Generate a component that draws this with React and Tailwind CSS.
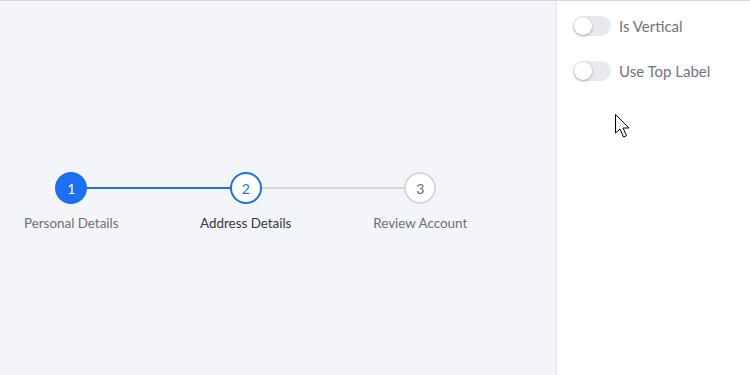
import React from "react";

const font = { fontFamily: "Lato, 'Noto Sans', sans-serif" };

function Step({ n, label, state, left, right }) {
  const circle =
    state === "done"
      ? "bg-[#1b6ff2] border-[#1b6ff2] text-white"
      : state === "active"
      ? "bg-white border-[#1b6ff2] text-[#1b6ff2]"
      : "bg-white border-[#d4d7dd] text-[#5f6670]";
  const labelColor = state === "active" ? "text-[#33383f]" : "text-[#6b717b]";
  return (
    <div className="flex flex-col items-center w-[174.5px] shrink-0">
      <div className="flex items-center w-full">
        <div className={`flex-1 h-[2px] ${left || "bg-transparent"}`} />
        <div
          className={`w-8 h-8 rounded-full border-2 flex items-center justify-center text-[14px] ${circle}`}
        >
          {n}
        </div>
        <div className={`flex-1 h-[2px] ${right || "bg-transparent"}`} />
      </div>
      <div className={`mt-[9px] text-[13.4px] leading-5 ${labelColor}`}>{label}</div>
    </div>
  );
}

function Toggle({ label }) {
  return (
    <div className="flex items-center gap-2 h-5">
      <div className="w-[38px] h-5 rounded-full bg-[#e8e9ee] flex items-center">
        <div className="w-[18px] h-[18px] rounded-full bg-white ml-[1px] shadow-[0_1px_3px_rgba(0,0,0,0.3)]" />
      </div>
      <span className="text-[15px] text-[#6f7680] leading-5">{label}</span>
    </div>
  );
}

export default function App() {
  return (
    <div
      className="w-[750px] h-[375px] flex border-t border-[#d6d8dc] overflow-hidden relative"
      style={font}
    >
      <div className="w-[557px] shrink-0 h-full bg-[#f4f5f9] border-r border-[#e2e4e8] pt-[171px]">
        <div className="flex -ml-[16px]">
          <Step n="1" label="Personal Details" state="done" right="bg-[#1b6ff2]" />
          <Step n="2" label="Address Details" state="active" left="bg-[#1b6ff2]" right="bg-[#d4d7dd]" />
          <Step n="3" label="Review Account" state="todo" left="bg-[#d4d7dd]" />
        </div>
      </div>
      <div className="flex-1 bg-white pl-4 pt-[15px] flex flex-col gap-[25px]">
        <Toggle label="Is Vertical" />
        <Toggle label="Use Top Label" />
      </div>
      <svg
        className="absolute left-[614px] top-[112px]"
        width="18"
        height="28"
        viewBox="0 0 18 28"
      >
        <path
          d="M1.5 1.5 L1.5 20 L6 16 L9.5 24 L12.5 22.7 L9 15 L15 15 Z"
          fill="white"
          stroke="black"
          strokeWidth="1"
          strokeLinejoin="miter"
        />
      </svg>
    </div>
  );
}
